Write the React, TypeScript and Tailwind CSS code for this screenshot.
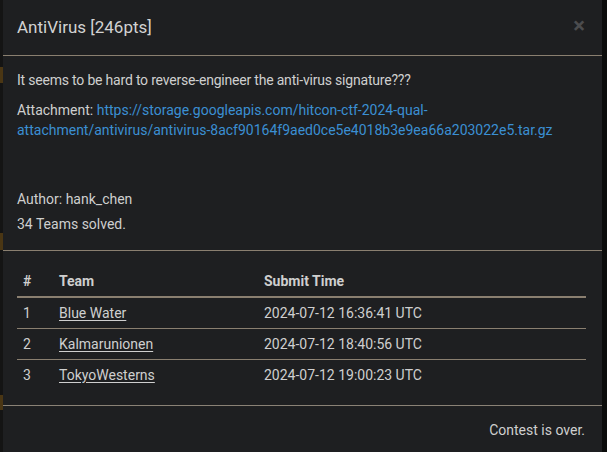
const solves = [
  { rank: 1, team: "Blue Water", time: "2024-07-12 16:36:41 UTC" },
  { rank: 2, team: "Kalmarunionen", time: "2024-07-12 18:40:56 UTC" },
  { rank: 3, team: "TokyoWesterns", time: "2024-07-12 19:00:23 UTC" },
];

const attachment =
  "https://storage.googleapis.com/hitcon-ctf-2024-qual-attachment/antivirus/antivirus-8acf90164f9aed0ce5e4018b3e9ea66a203022e5.tar.gz";

export default function App() {
  return (
    <div className="flex h-[452px] w-[607px] overflow-hidden bg-[#0b0c0b] font-['Roboto','Liberation_Sans',sans-serif] text-[14px] leading-[20px] text-[#cfcfcf]">
      {/* backdrop sliver behind the modal */}
      <div className="flex w-[3px] shrink-0 flex-col bg-[#141414]">
        <div className="mt-[67px] h-[16px] bg-[#4a3614]" />
        <div className="mt-[150px] h-[17px] bg-[#4a3614]" />
        <div className="mt-[145px] h-[15px] bg-[#4a3614]" />
      </div>

      <div className="flex w-[599px] shrink-0 flex-col bg-[#1e1f21]">
        <div className="flex items-start justify-between border-b border-[#8a7f70] pb-[16px] pl-[14px] pr-[16px] pt-[15px]">
          <h5 className="text-[17px] leading-[24px] text-[#d2d2d2]">AntiVirus [246pts]</h5>
          <button className="mr-[1px] text-[22px] font-bold leading-[22px] text-[#4b4c4e]">×</button>
        </div>

        <div className="border-b border-[#8a7f70] pb-[16px] pl-[14px] pr-[16px] pt-[14px]">
          <p className="mb-[10px] tracking-[-0.2px]">
            It seems to be hard to reverse-engineer the anti-virus signature???
          </p>
          <p>
            Attachment:{" "}
            <a href="#" className="text-[#3b8fd3]">
              {attachment}
            </a>
          </p>
          <p className="mt-[49px]">Author: hank_chen</p>
          <p className="mt-[5px]">34 Teams solved.</p>
        </div>

        <div className="border-b border-[#8a8276] pb-[15px] pl-[14px] pr-[16px] pt-[15px]">
          <table className="w-full border-collapse text-left">
            <thead>
              <tr className="border-b-2 border-[#8a7f70]">
                <th className="w-[36px] px-[6px] py-[5px] font-bold">#</th>
                <th className="w-[205px] px-[6px] py-[5px] font-bold">Team</th>
                <th className="px-[6px] py-[5px] font-bold">Submit Time</th>
              </tr>
            </thead>
            <tbody>
              {solves.map((s, i) => (
                <tr key={s.rank} className={i < solves.length - 1 ? "border-b border-[#8a7f70]" : ""}>
                  <td className="px-[6px] py-[5px]">{s.rank}</td>
                  <td className="px-[6px] py-[5px]">
                    <a href="#" className="underline underline-offset-2">
                      {s.team}
                    </a>
                  </td>
                  <td className="px-[6px] py-[5px]">{s.time}</td>
                </tr>
              ))}
            </tbody>
          </table>
        </div>

        <div className="flex justify-end pl-[14px] pr-[17px] pt-[14px]">
          <span>Contest is over.</span>
        </div>
      </div>
    </div>
  );
}
